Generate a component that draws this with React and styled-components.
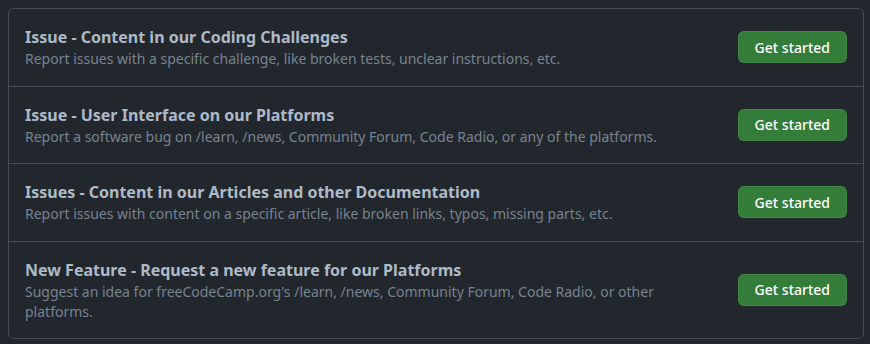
import styled, { createGlobalStyle } from "styled-components";

const GlobalStyle = createGlobalStyle`
  body {
    margin: 8px 6px 8px 8px;
    background: #22272e;
    font-family: "Noto Sans", "DejaVu Sans", sans-serif;
  }
`;

const Box = styled.div`
  border: 1px solid #444c56;
  border-radius: 6px;
  background: #22272e;
`;

const Row = styled.div`
  display: flex;
  align-items: center;
  gap: 16px;
  padding: 16px;
  & + & {
    border-top: 1px solid #444c56;
  }
`;

const Info = styled.div`
  flex: 1;
  min-width: 0;
`;

const Title = styled.div`
  color: #adbac7;
  font-size: 16px;
  font-weight: 700;
  line-height: 24px;
`;

const Desc = styled.div`
  color: #768390;
  font-size: 14px;
  line-height: 20px;
  padding-bottom: 0.5px;
`;

const Button = styled.button`
  flex: none;
  height: 32px;
  padding: 0 16px;
  border: 1px solid rgba(205, 217, 229, 0.1);
  border-radius: 6px;
  background: #347d39;
  color: #ffffff;
  font-family: inherit;
  font-size: 14px;
  font-weight: 500;
  cursor: pointer;
`;

const templates = [
  {
    title: "Issue - Content in our Coding Challenges",
    desc: "Report issues with a specific challenge, like broken tests, unclear instructions, etc.",
  },
  {
    title: "Issue - User Interface on our Platforms",
    desc: "Report a software bug on /learn, /news, Community Forum, Code Radio, or any of the platforms.",
  },
  {
    title: "Issues - Content in our Articles and other Documentation",
    desc: "Report issues with content on a specific article, like broken links, typos, missing parts, etc.",
  },
  {
    title: "New Feature - Request a new feature for our Platforms",
    desc: "Suggest an idea for freeCodeCamp.org's /learn, /news, Community Forum, Code Radio, or other platforms.",
  },
];

const App = () => {
  return (
    <>
      <GlobalStyle />
      <Box>
        {templates.map((t) => (
          <Row key={t.title}>
            <Info>
              <Title>{t.title}</Title>
              <Desc>{t.desc}</Desc>
            </Info>
            <Button>Get started</Button>
          </Row>
        ))}
      </Box>
    </>
  );
};

export default App;
